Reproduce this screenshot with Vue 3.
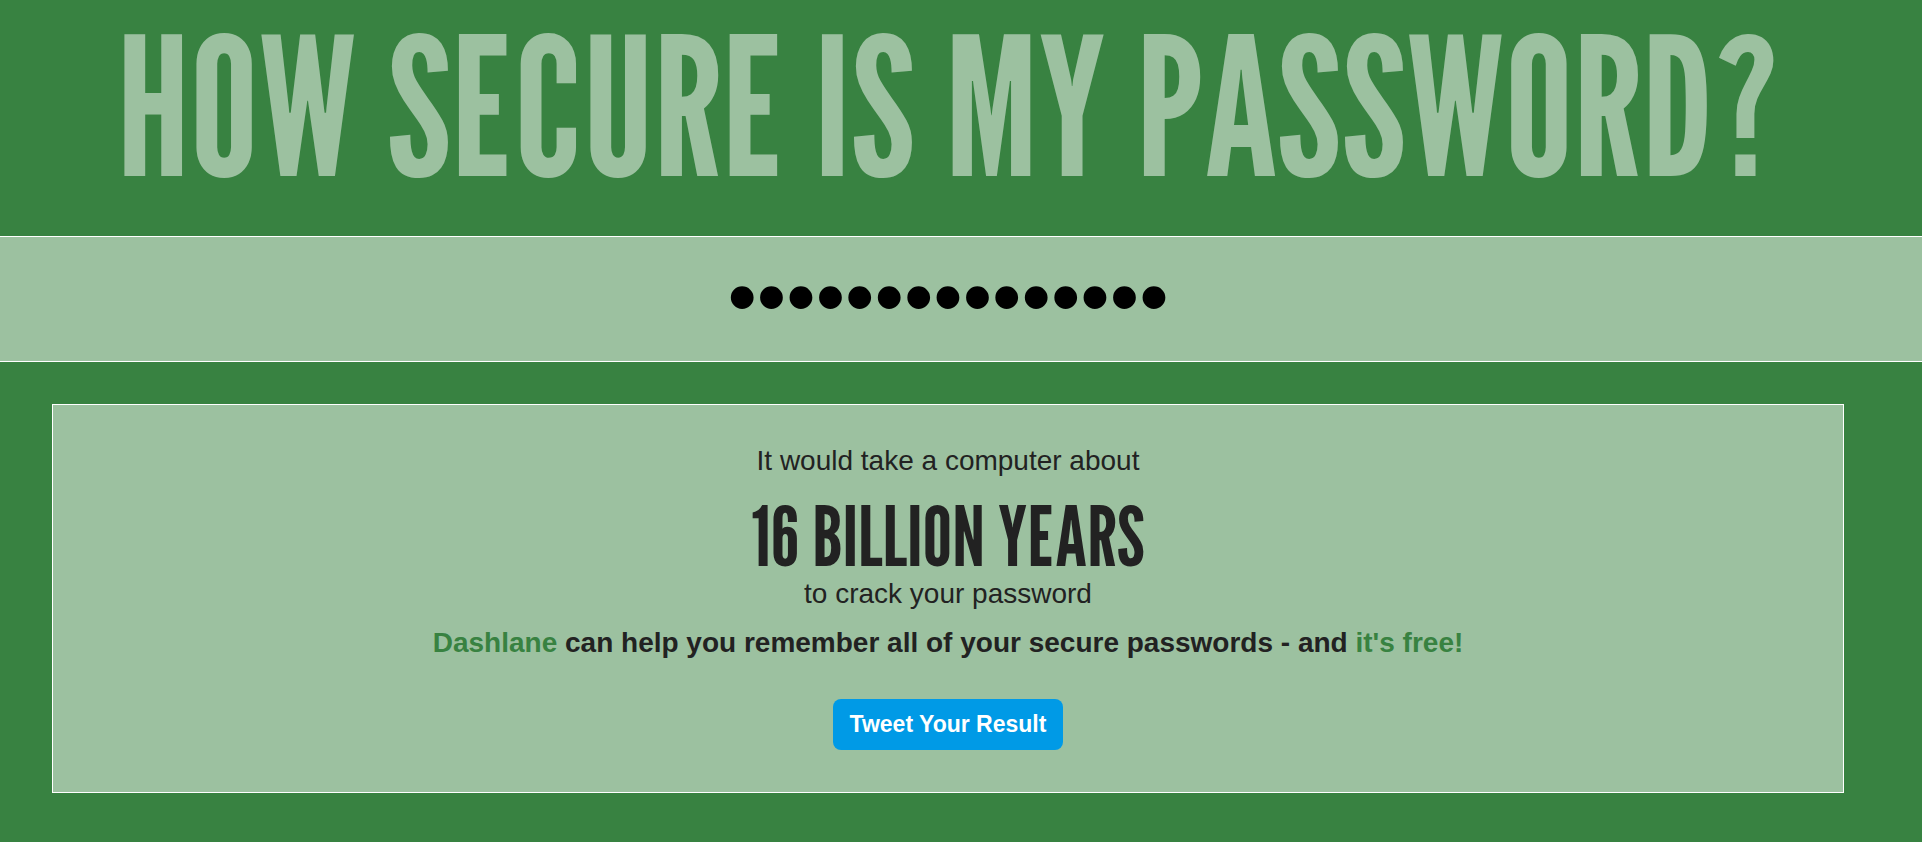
<script setup>
import { ref } from 'vue'

const password = ref('correcthorsebat')
const estimate = '16 Billion Years'
</script>

<template>
  <main class="page">
    <h1 class="title"><label for="password">How Secure Is My Password?</label></h1>
    <input id="password" v-model="password" class="password" type="password" autocomplete="off" />
    <section class="result" aria-live="polite">
      <p class="line">It would take a computer about</p>
      <p class="estimate">{{ estimate }}</p>
      <p class="line">to crack your password</p>
      <p class="promo">
        <a href="#dashlane">Dashlane</a> can help you remember all of your secure passwords - and
        <a href="#free">it's free!</a>
      </p>
      <button class="tweet" type="button">Tweet Your Result</button>
    </section>
  </main>
</template>

<style>
body {
  margin: 0;
  background: #388241;
}
</style>

<style scoped>
.page {
  min-height: 100vh;
  box-sizing: border-box;
  background: #388241;
  color: #222;
  font-family: "Liberation Sans", Arial, sans-serif;
  text-align: center;
}

.title {
  margin: 0;
  padding: 6px 26px 30px 0;
  color: #9cc1a0;
  font-family: "League Gothic", "Liberation Sans Narrow", "Liberation Sans", sans-serif;
  font-size: 192px;
  font-weight: 400;
  line-height: 200px;
  text-transform: uppercase;
  white-space: nowrap;
}

.password {
  display: block;
  box-sizing: border-box;
  width: 100%;
  height: 126px;
  margin: 0;
  padding: 0 26px 6px 0;
  border: solid #fff;
  border-width: 1px 0;
  border-radius: 0;
  outline: none;
  background: #9cc1a0;
  color: #000;
  font-family: "Liberation Sans", Arial, sans-serif;
  font-size: 84px;
  text-align: center;
}

.result {
  margin: 42px 78px 0 52px;
  padding: 36px 24px 42px;
  border: 1px solid #fff;
  background: #9cc1a0;
}

.line,
.promo {
  margin: 0;
  font-size: 28px;
  line-height: 40px;
}

.estimate {
  margin: 16px 0 0;
  font-family: "League Gothic", "Liberation Sans Narrow", "Liberation Sans", sans-serif;
  font-size: 83px;
  font-weight: 400;
  line-height: 77px;
  text-transform: uppercase;
}

.promo {
  margin-top: 9px;
  font-weight: 700;
}

.promo a {
  color: #388241;
  text-decoration: none;
}

.tweet {
  margin-top: 36px;
  padding: 12px 17px;
  border: 0;
  border-radius: 8px;
  background: #009ae6;
  color: #fff;
  font: 700 23px/27px "Liberation Sans", Arial, sans-serif;
  cursor: pointer;
}
</style>
